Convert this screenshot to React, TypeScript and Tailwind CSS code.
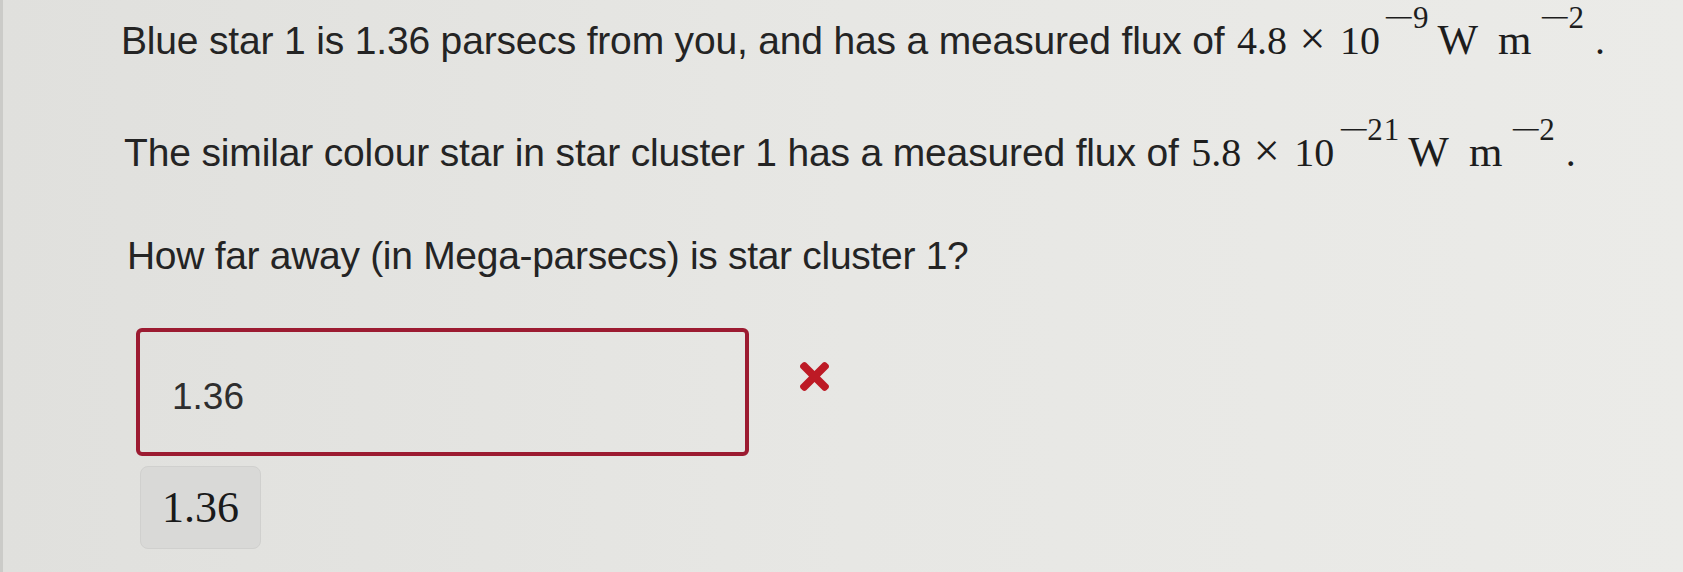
import React from 'react';

// superscript exponent (KaTeX-ish), minus drawn wider like the math font
const Sup = ({ exp, className = '' }: { exp: string; className?: string }) => (
  <span className={`align-[26px] text-[31px] leading-[0] tracking-[1px] ${className}`}>
    <span className="inline-block w-[28px] text-center tracking-normal">
      <span className="inline-block scale-x-[1.8]">{'\u2212'}</span>
    </span>
    {exp}
  </span>
);

const Flux = ({ mant, exp }: { mant: string; exp: string }) => (
  <span className="ml-[2px] font-['Liberation_Serif',serif] text-[40px] tracking-normal text-[#1d1d1d]">
    <span>{mant}</span>
    <span className="ml-[12.5px] mr-[14.5px] text-[46px] leading-[0]">×</span>
    <span>10</span>
    <Sup exp={exp} className="ml-[5px]" />
    <span className="ml-[8px] text-[43px]">W</span>
    <span className="ml-[20px] text-[43px]">m</span>
    <Sup exp="2" className="ml-[9px]" />
    <span className="ml-[10px]">.</span>
  </span>
);

const App = () => {
  return (
    <div className="flex min-h-[572px] w-full bg-gradient-to-r from-[#e0e0dd] via-[#e7e7e4] to-[#ebebe8]">
      <div className="w-[3px] shrink-0 bg-[#cbcbc8]" />
      <div className="flex-1 pl-[121px] pt-[17px] font-['Liberation_Sans',Arial,sans-serif] text-[#242424]">
        <p className="-ml-[3px] whitespace-nowrap text-[39px] leading-[46px] tracking-[-0.17px]">
          Blue star 1 is 1.36 parsecs from you, and has a measured flux of <Flux mant="4.8" exp="9" />
        </p>
        <p className="mt-[65px] whitespace-nowrap text-[39px] leading-[46px] tracking-[-0.15px]">
          The similar colour star in star cluster 1 has a measured flux of <Flux mant="5.8" exp="21" />
        </p>
        <p className="ml-[3px] mt-[57px] whitespace-nowrap text-[39px] leading-[46px] tracking-[-0.3px]">
          How far away (in Mega-parsecs) is star cluster 1?
        </p>

        <div className="mt-[49px] flex items-start">
          <div className="ml-[12px] h-[128px] w-[613px] rounded-[6px] border-[4px] border-[#9c1b31] pl-[32px] pt-[45px]">
            <div className="text-[37px] leading-[40px] text-[#2e2e2e]">1.36</div>
          </div>
          <svg className="ml-[50px] mt-[34px]" width="31" height="29" viewBox="0 80 352 352">
            <path
              fill="#bd1a25"
              d="M242.72 256l100.07-100.07c12.28-12.28 12.28-32.19 0-44.48l-22.24-22.24c-12.28-12.28-32.19-12.28-44.48 0L176 189.28 75.93 89.21c-12.28-12.28-32.19-12.28-44.48 0L9.21 111.45c-12.28 12.28-12.28 32.19 0 44.48L109.28 256 9.21 356.07c-12.28 12.28-12.28 32.19 0 44.48l22.24 22.24c12.28 12.28 32.2 12.28 44.48 0L176 322.72l100.07 100.07c12.28 12.28 32.2 12.28 44.48 0l22.24-22.24c12.28-12.28 12.28-32.19 0-44.48L242.72 256z"
            />
          </svg>
        </div>

        <div className="ml-[16px] mt-[10px] flex h-[83px] w-[121px] items-center justify-center rounded-[8px] border border-[#d0d0ce] bg-[#d9d9d7]">
          <span className="font-['Liberation_Serif',serif] text-[44px] leading-none text-[#1a1a1a]">1.36</span>
        </div>
      </div>
    </div>
  );
};

export default App;
